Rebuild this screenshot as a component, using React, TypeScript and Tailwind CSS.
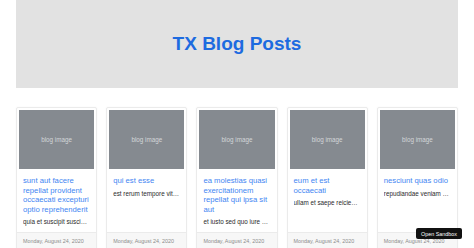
import React from 'react';

type Post = { id: number; title: string; body: string };

const POSTS: Post[] = [
  { id: 1, title: 'sunt aut facere repellat provident occaecati excepturi optio reprehenderit', body: 'quia et suscipit suscipit recusandae consequuntur expedita et cum' },
  { id: 2, title: 'qui est esse', body: 'est rerum tempore vitae sequi sint nihil reprehenderit dolor' },
  { id: 3, title: 'ea molestias quasi exercitationem repellat qui ipsa sit aut', body: 'et iusto sed quo iure voluptatem occaecati omnis eligendi' },
  { id: 4, title: 'eum et est occaecati', body: 'ullam et saepe reiciendis voluptatem adipisci sit amet' },
  { id: 5, title: 'nesciunt quas odio', body: 'repudiandae veniam quaerat sunt sed alias aut fugiat' },
];

const font = { fontFamily: '"Liberation Sans", Arial, sans-serif' };

const PostCard: React.FC<{ post: Post }> = ({ post }) => (
  <div className="flex flex-col border border-[#ebebeb] rounded-[2px] bg-white shadow-[0_0_2px_rgba(0,0,0,0.04)] overflow-hidden">
    <div className="m-[2px] h-[59px] bg-[#858a90] flex items-center justify-center">
      <span className="text-[6.3px] text-[#d3d6d9]">blog image</span>
    </div>
    <div className="flex-1 px-[6px] pt-[5px] pb-[6px]">
      <h3 className="text-[7.7px] leading-[9.5px] text-[#3f86f2]">{post.title}</h3>
      <p className="mt-[4px] text-[6.3px] leading-[8px] text-[#2a2a2a] truncate">{post.body}</p>
    </div>
    <div className="border-t border-[#ebebeb] bg-[#f7f7f7] px-[6px] pt-[5px] pb-[6px]">
      <span className="text-[5.4px] leading-[7px] text-[#8c8c8c] block">Monday, August 24, 2020</span>
    </div>
  </div>
);

export default function App() {
  return (
    <div className="bg-white min-h-screen" style={font}>
      <div className="mx-4 h-[88px] bg-[#e2e2e2] flex items-center justify-center">
        <h1 className="text-[19px] font-bold text-[#1d6be0]">TX Blog Posts</h1>
      </div>
      <div className="mx-4 mt-[19px] grid grid-cols-5 gap-[9px]">
        {POSTS.map((p) => (
          <PostCard key={p.id} post={p} />
        ))}
      </div>
      <button
        type="button"
        className="fixed right-[12px] bottom-[9px] bg-[#111] text-white text-[5.4px] leading-[6px] px-[5px] py-[2.5px] rounded-[2px]"
      >
        Open Sandbox
      </button>
    </div>
  );
}
